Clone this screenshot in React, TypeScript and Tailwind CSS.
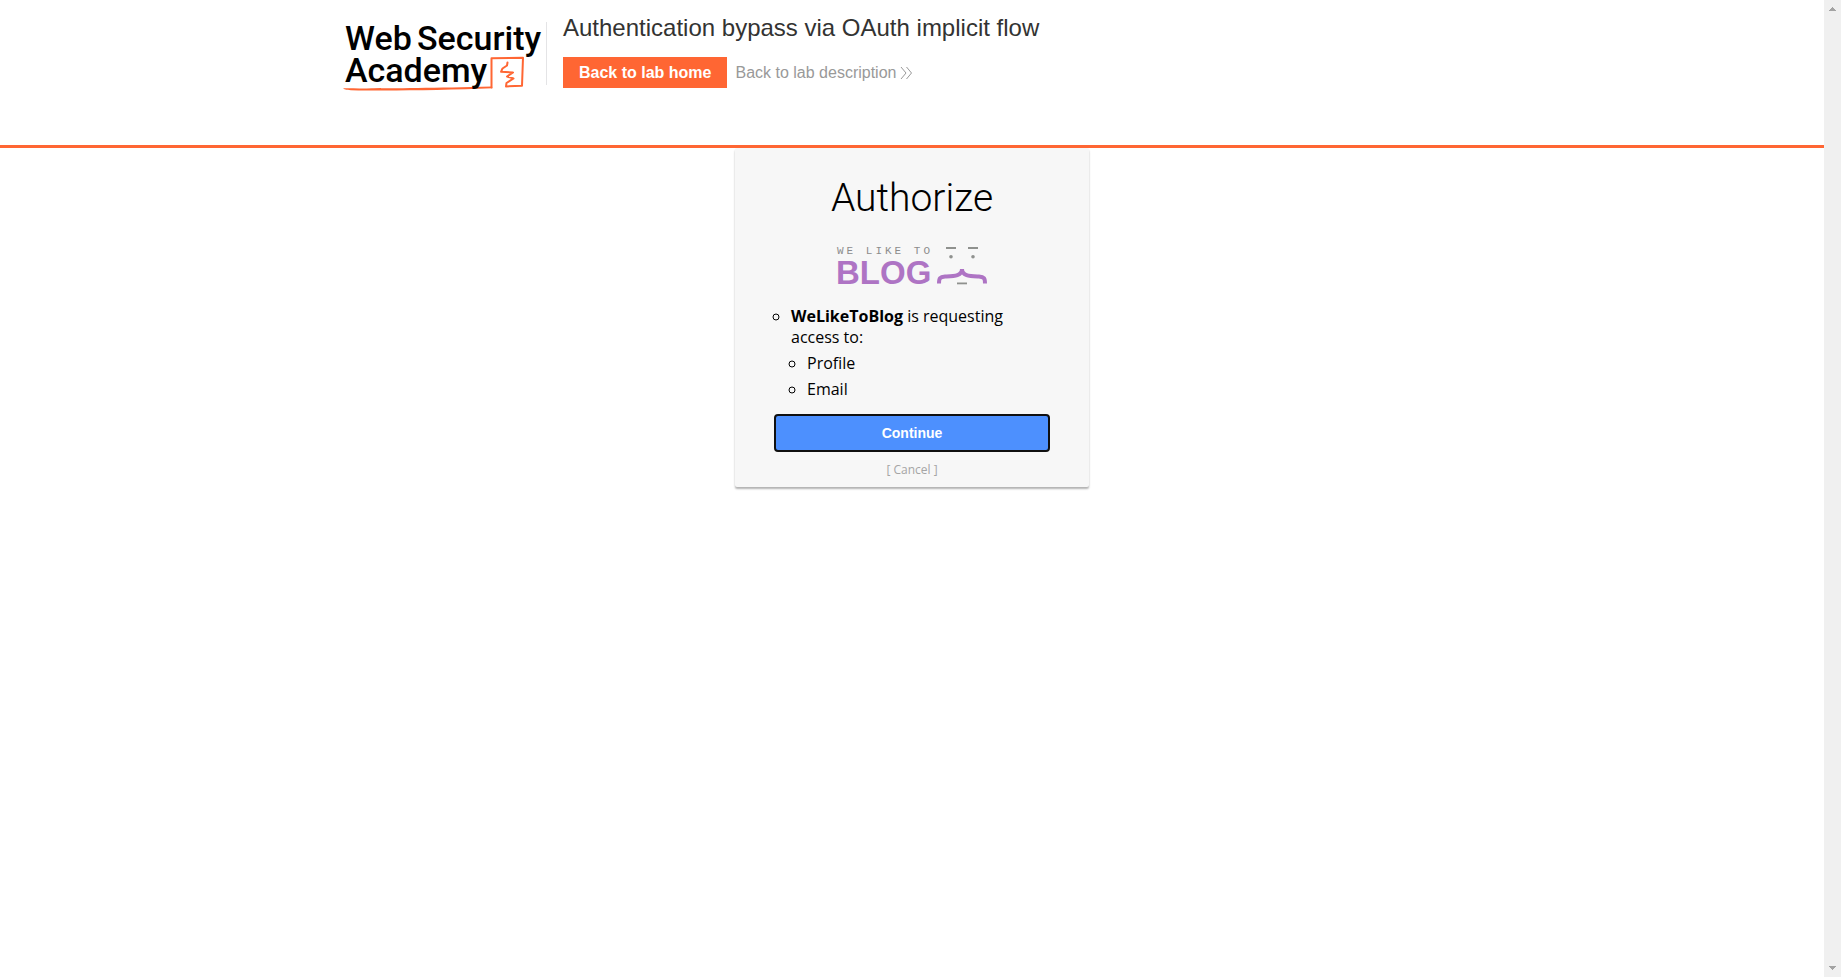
import React from 'react';

const scopes = ['Profile', 'Email'];

const AcademyLogo: React.FC = () => (
    <svg
        className="block"
        width="200"
        height="76"
        viewBox="0 0 200 76"
        role="img"
        aria-label="Web Security Academy"
    >
        <path
            d="M148.500 71.600 L148.500 42.300 L180 41.800 L179 69.800 L163 70.400 L163.500 67 L170.500 62.500 L164 60.500 L170 56.500 L158 55.800 L159.500 52.500 L164 49.500 L164.500 46.500"
            fill="none"
            stroke="#ff6633"
            strokeWidth="2"
            strokeLinejoin="round"
            strokeLinecap="round"
        />
        <path
            d="M0 72.300 C20 72.600 70 72.600 149 70.600 L149.500 72.300 C100 74.400 40 75 8 74.200 C3 74 1 73.300 0 72.300 Z"
            fill="#ff6633"
        />
        <g fill="#000" fontFamily="Roboto, sans-serif" fontWeight="500" fontSize="34">
            <text x="2" y="34">Web</text>
            <text x="74" y="34">Security</text>
            <text x="2" y="66">Academy</text>
        </g>
    </svg>
);

const BlogLogo: React.FC = () => (
    <svg
        className="block"
        width="154"
        height="50"
        viewBox="0 0 154 50"
        role="img"
        aria-label="We like to blog"
    >
        <text className="tracking-[3px]" x="2" y="10" fill="#8c8c8c" fontFamily="'Liberation Mono', monospace" fontSize="11">
            WE LIKE TO
        </text>
        <text x="1" y="40" fill="#ae74c4" fontFamily="'Liberation Sans', Arial, sans-serif" fontWeight="700" fontSize="33">
            BLOG
        </text>
        <g fill="#8f918e">
            <rect x="111" y="3" width="10" height="2" />
            <rect x="133" y="3" width="10" height="2" />
            <circle cx="116" cy="12.7" r="1.8" />
            <circle cx="138" cy="12.7" r="1.8" />
            <rect x="122" y="38.5" width="10" height="1.8" />
        </g>
        <path
            d="M104 39.500 C104 34 105 33 110 32.500 C119 32 127 32 127 25 C127 32 135 32 144 32.500 C149 33 150 34 150 39.500"
            fill="none"
            stroke="#ae74c4"
            strokeWidth="4"
        />
    </svg>
);

const Scrollbar: React.FC = () => (
    <div className="flex w-[17px] shrink-0 flex-col items-center justify-between bg-[#f0f0f0] py-[7px]" aria-hidden="true">
        <svg width="7" height="4" viewBox="0 0 7 4" fill="#a3a3a3">
            <path d="M3 0h1v1h1v1h1v1h1v1H0V3h1V2h1V1h1z" />
        </svg>
        <svg width="7" height="4" viewBox="0 0 7 4" fill="#a3a3a3">
            <path d="M0 0h7v1H6v1H5v1H4v1H3V3H2V2H1V1H0z" />
        </svg>
    </div>
);

const Header: React.FC = () => (
    <header className="border-b-[3px] border-[#ff6633] pb-[57px] font-['Liberation_Sans',Arial,sans-serif]">
        <div className="mx-auto flex max-w-[1138px] pt-[14px]">
            <div className="mt-2 flex h-[63px] w-[204px] shrink-0 items-center border-r border-[#e4e4e6]">
                <AcademyLogo />
            </div>
            <div className="pl-4">
                <h2 className="text-2xl leading-7 text-[#333332]">Authentication bypass via OAuth implicit flow</h2>
                <div className="mt-[15px] flex items-center gap-2">
                    <a href="#home" className="bg-[#ff6633] px-4 text-base font-bold leading-[31px] text-white">
                        Back to lab home
                    </a>
                    <a href="#description" className="flex items-center gap-1 text-base text-[#999]">
                        Back to lab description
                        <svg width="13" height="14" viewBox="0 0 13 14" fill="none" stroke="#999" strokeWidth="1">
                            <path d="M1 1l5 6-5 6M6.500 1l5 6-5 6" />
                        </svg>
                    </a>
                </div>
            </div>
        </div>
    </header>
);

const AuthorizeCard: React.FC = () => (
    <main className="mx-auto w-[354px] rounded-xs bg-[#f7f7f7] px-[39px] pt-[26px] pb-[7px] font-['Open_Sans',sans-serif] shadow-[0_2px_2px_rgba(0,0,0,0.3)]">
        <h1 className="text-center font-[Roboto,sans-serif] text-[39px] font-light leading-12 text-black">Authorize</h1>
        <div className="mt-[22px] flex justify-center">
            <BlogLogo />
        </div>
        <ul className="mt-3 list-[circle] pl-[17px] text-base leading-[21px] text-black">
            <li>
                <strong className="font-bold">WeLikeToBlog</strong> is requesting access to:
                <ul className="mt-[5px] flex flex-col gap-[5px] list-[circle] pl-4">
                    {scopes.map(scope => (
                        <li key={scope}>{scope}</li>
                    ))}
                </ul>
            </li>
        </ul>
        <form onSubmit={e => e.preventDefault()}>
            <button
                type="submit"
                className="mt-[14px] block h-[38px] w-full rounded-sm border-2 border-[#101010] bg-[#4d90fe] font-['Liberation_Sans',Arial,sans-serif] text-sm font-bold text-white"
            >
                Continue
            </button>
        </form>
        <p className="mt-2 text-center text-xs leading-5 text-[#a5a5a5]">
            <a href="#cancel">[ Cancel ]</a>
        </p>
    </main>
);

const App: React.FC = () => {
    return (
        <div className="flex min-h-screen bg-white">
            <div className="min-w-0 flex-1">
                <Header />
                <AuthorizeCard />
            </div>
            <Scrollbar />
        </div>
    );
};

export default App;
